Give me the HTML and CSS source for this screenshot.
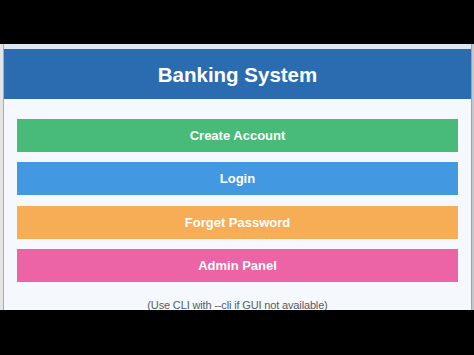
FILE: index.html
```html
<!DOCTYPE html>
<html lang="en">
<head>
	<meta charset="UTF-8">
	<title>Banking System</title>
	<link rel="stylesheet" href="styles.css">
</head>
<body>
	<div class="screen">
		<div class="bar"></div>
		<div class="window">
			<div class="side-left"></div>
			<div class="app">
				<div class="header">
					<h1>Banking System</h1>
				</div>
				<div class="menu">
					<a class="btn green" href="#">Create Account</a>
					<a class="btn blue" href="#">Login</a>
					<a class="btn orange" href="#">Forget Password</a>
					<a class="btn pink" href="#">Admin Panel</a>
				</div>
				<p class="note">(Use CLI with --cli if GUI not available)</p>
			</div>
			<div class="side-right"></div>
		</div>
		<div class="bar bottom"></div>
	</div>
</body>
</html>
```

FILE: styles.css
```css
*{margin:0; padding:0; box-sizing:border-box; font-family:"Liberation Sans", Arial, sans-serif;}
body{background:#000;}
.screen{
	width:474px;
	height:355px;
	display:flex;
	flex-direction:column;
}
.bar{height:44px; background:#000;}
.bar.bottom{flex:1;}
.window{
	height:266px;
	display:flex;
	overflow:hidden;
}
.side-left{
	width:4px;
	background:#e4e4e4;
	border-right:1px solid #a9a9a9;
}
.side-right{
	width:3px;
	background:#c4c8cc;
	border-left:1px solid #9ea3a8;
}
.app{
	flex:1;
	background:#f5f8fc;
	border-top:5px solid #dbe7f4;
	overflow:hidden;
}
.header{
	height:50px;
	background:#2b6cb0;
	display:flex;
	align-items:center;
	justify-content:center;
	padding-top:2px;
}
.header h1{
	color:#fff;
	font-size:20.5px;
	font-weight:bold;
}
.menu{
	padding:20px 13px 0 13px;
	display:flex;
	flex-direction:column;
	gap:10.3px;
}
.btn{
	display:block;
	height:33px;
	line-height:33px;
	text-align:center;
	color:#fff;
	font-size:13px;
	font-weight:bold;
	text-decoration:none;
}
.green{background:#48bb78;}
.blue{background:#4299e1;}
.orange{background:#f6ad55;}
.pink{background:#ed64a6;}
.note{
	margin-top:17px;
	text-align:center;
	font-size:11px;
	letter-spacing:-0.15px;
	color:#555b63;
}
```
